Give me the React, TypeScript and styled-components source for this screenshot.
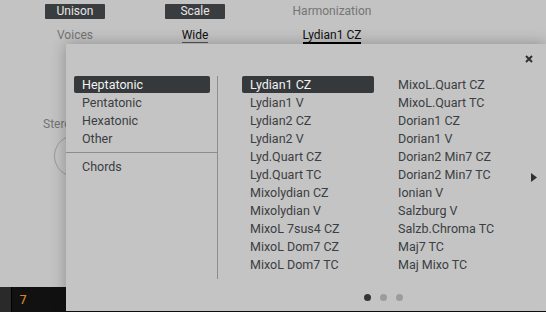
import React from "react";
import styled, { createGlobalStyle } from "styled-components";

const categories = ["Heptatonic", "Pentatonic", "Hexatonic", "Other"];

const scales = [
  "Lydian1 CZ",
  "Lydian1 V",
  "Lydian2 CZ",
  "Lydian2 V",
  "Lyd.Quart CZ",
  "Lyd.Quart TC",
  "Mixolydian CZ",
  "Mixolydian V",
  "MixoL 7sus4 CZ",
  "MixoL Dom7 CZ",
  "MixoL Dom7 TC",
  "MixoL.Quart CZ",
  "MixoL.Quart TC",
  "Dorian1 CZ",
  "Dorian1 V",
  "Dorian2 Min7 CZ",
  "Dorian2 Min7 TC",
  "Ionian V",
  "Salzburg V",
  "Salzb.Chroma TC",
  "Maj7 TC",
  "Maj Mixo TC",
];

const App = () => (
  <>
    <GlobalStyle />
    <Page>
      <Header>
        <Column>
          <TabButton>Unison</TabButton>
          <Label>Voices</Label>
        </Column>
        <Column>
          <TabButton>Scale</TabButton>
          <Value>Wide</Value>
        </Column>
        <Column>
          <Title>Harmonization</Title>
          <Value strong>Lydian1 CZ</Value>
        </Column>
      </Header>

      <Stereo>
        <Label>Stereo</Label>
        <svg width="44" height="44" viewBox="0 0 44 44">
          <circle cx="21" cy="22" r="20.5" fill="none" stroke="#9a9a9a" strokeWidth="1" />
        </svg>
      </Stereo>

      <BottomBar>
        <BarSlot />
        <BarValue>7</BarValue>
      </BottomBar>

      <Panel>
        <Close>
          <svg width="8" height="8" viewBox="0 0 8 8">
            <path d="M1 1L7 7M7 1L1 7" stroke="#2e3033" strokeWidth="2" />
          </svg>
        </Close>

        <Body>
          <Categories>
            {categories.map((c, i) => (
              <Item key={c} active={i === 0}>
                {c}
              </Item>
            ))}
            <Divider />
            <Item>Chords</Item>
          </Categories>

          <ScaleGrid>
            {scales.map((s, i) => (
              <Item key={s} active={i === 0}>
                {s}
              </Item>
            ))}
          </ScaleGrid>
        </Body>

        <Dots>
          <Dot active />
          <Dot />
          <Dot />
        </Dots>

        <NextArrow>
          <svg width="6" height="9" viewBox="0 0 6 9">
            <path d="M0 0L6 4.5L0 9Z" fill="#2e3033" />
          </svg>
        </NextArrow>
      </Panel>
    </Page>
  </>
);

export default App;

const GlobalStyle = createGlobalStyle`
  body {
    margin: 0;
    background: #c3c3c3;
    font-family: Roboto, "Noto Sans", sans-serif;
    overflow: hidden;
  }
`;

const Page = styled.div`
  position: relative;
  width: 546px;
  height: 312px;
  display: flex;
  flex-direction: column;
  background: #c3c3c3;
`;

const Header = styled.div`
  display: grid;
  grid-template-columns: 120px 120px 154px;
  padding: 4px 0 0 15px;
`;

const Column = styled.div`
  display: flex;
  flex-direction: column;
  align-items: center;
  gap: 9px;
`;

const TabButton = styled.div`
  width: 60px;
  height: 15px;
  line-height: 15px;
  background: #3a3d40;
  color: #e6e6e6;
  font-size: 12px;
  text-align: center;
  border-radius: 1px;
`;

const Title = styled.div`
  height: 15px;
  line-height: 15px;
  font-size: 12px;
  color: #757575;
`;

const Label = styled.div`
  line-height: 14px;
  font-size: 12px;
  color: #737373;
`;

const Value = styled.div<{ strong?: boolean }>`
  line-height: 14px;
  font-size: 12px;
  color: #111;
  border-bottom: ${(p) => (p.strong ? "2px solid #000" : "1px solid #555")};
`;

const Stereo = styled.div`
  display: flex;
  flex-direction: column;
  align-items: flex-start;
  gap: 3px;
  padding: 73px 0 0 43px;
  svg {
    margin-left: 11px;
  }
`;

const BottomBar = styled.div`
  margin-top: auto;
  height: 25px;
  display: flex;
  background: #111;
`;

const BarSlot = styled.div`
  width: 11px;
  background: #2a2a2a;
  border-right: 1px solid #000;
`;

const BarValue = styled.div`
  padding-left: 7px;
  line-height: 25px;
  font-family: "DejaVu Sans", sans-serif;
  font-size: 13px;
  color: #d8842c;
`;

const Panel = styled.div`
  position: absolute;
  left: 66px;
  top: 44px;
  right: 0;
  bottom: 1px;
  padding-top: 32px;
  background: #c4c4c4;
  box-shadow: 0 0 14px rgba(0, 0, 0, 0.28);
`;

const Close = styled.div`
  position: absolute;
  top: 11px;
  right: 13px;
  display: flex;
`;

const NextArrow = styled.div`
  position: absolute;
  top: 129px;
  right: 9px;
  display: flex;
`;

const Body = styled.div`
  display: flex;
  height: 203px;
`;

const Categories = styled.div`
  width: 152px;
  padding-left: 8px;
  box-sizing: border-box;
  border-right: 1px solid #8c8c8c;
  display: flex;
  flex-direction: column;
  align-items: flex-start;
`;

const Divider = styled.div`
  align-self: stretch;
  margin: 4px 0 5px -8px;
  height: 1px;
  background: #8c8c8c;
`;

const ScaleGrid = styled.div`
  display: grid;
  grid-template-columns: 132px 132px;
  grid-template-rows: repeat(11, 18px);
  grid-auto-flow: column;
  column-gap: 16px;
  align-content: start;
  padding-left: 24px;
`;

const Item = styled.div<{ active?: boolean }>`
  width: ${(p) => (p.active ? "136px" : "auto")};
  height: 17px;
  margin-bottom: 1px;
  padding-left: 8px;
  box-sizing: border-box;
  line-height: 17px;
  font-size: 12.5px;
  white-space: nowrap;
  border-radius: 2px;
  color: ${(p) => (p.active ? "#f2f2f2" : "#3b3e42")};
  background: ${(p) => (p.active ? "#36393c" : "transparent")};
  ${ScaleGrid} & {
    width: auto;
  }
`;

const Dots = styled.div`
  display: flex;
  justify-content: center;
  gap: 9px;
  width: 280px;
  margin: 15px 0 0 177px;
`;

const Dot = styled.div<{ active?: boolean }>`
  width: 7px;
  height: 7px;
  border-radius: 50%;
  background: ${(p) => (p.active ? "#333538" : "#9c9c9c")};
`;
